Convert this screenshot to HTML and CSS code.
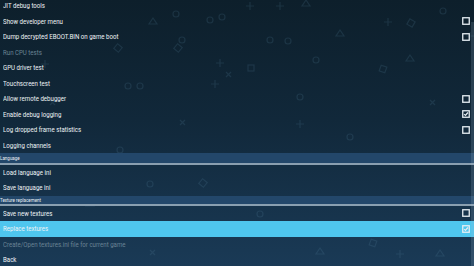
FILE: index.html
```html
<!DOCTYPE html>
<html>
<head>
<meta charset="utf-8">
<link rel="stylesheet" href="styles.css">
</head>
<body>
<div class="screen">
  <svg class="symbols" width="474" height="266" viewBox="0 0 474 266">
    <g fill="none" stroke="#5f8eaa" stroke-width="1.2" opacity="0.17">
      <circle cx="210" cy="20" r="3"/><circle cx="222" cy="17" r="3"/>
      <circle cx="270" cy="40" r="3"/><circle cx="288" cy="41" r="3"/>
      <circle cx="316" cy="60" r="3"/><circle cx="443" cy="11" r="3"/>
      <circle cx="176" cy="14" r="3"/><circle cx="182" cy="40" r="3"/>
      <circle cx="128" cy="86" r="3"/><circle cx="140" cy="86" r="3"/>
      <circle cx="300" cy="97" r="3"/><circle cx="350" cy="137" r="3"/>
      <circle cx="120" cy="150" r="3"/><circle cx="150" cy="184" r="3"/>
      <circle cx="260" cy="214" r="3"/><circle cx="440" cy="160" r="3"/>
      <rect x="408" y="20" width="6" height="6" transform="rotate(30 411 23)"/>
      <rect x="248" y="65" width="6" height="6"/>
      <rect x="380" y="66" width="6" height="6" transform="rotate(20 383 69)"/>
      <rect x="115" y="45" width="6" height="6" transform="rotate(40 118 48)"/>
      <rect x="175" y="45" width="6" height="6" transform="rotate(40 178 48)"/>
      <rect x="200" y="180" width="6" height="6" transform="rotate(40 203 183)"/>
      <rect x="370" y="240" width="6" height="6" transform="rotate(20 373 243)"/>
      <path d="M250 2v8M246 6h8M280 2v8M276 6h8M388 18v8M384 22h8M220 59v8M216 63h8M470 32v8M466 36h8M215 80v8M211 84h8M300 120v8M296 124h8M45 60v8M41 64h8M400 250v8M396 254h8"/>
      <path d="M306 0l4 6h-8zM153 18l4 6h-8zM410 55l4 6h-8zM340 30l4 6h-8zM90 200l4 6h-8zM320 248l4 6h-8zM440 250l4 6h-8z"/>
      <path d="M226 72l5 5M231 72l-5 5M430 100l5 5M435 100l-5 5M50 100l5 5M55 100l-5 5M180 120l5 5M185 120l-5 5M150 250l5 5M155 250l-5 5"/>
    </g>
  </svg>
  <div class="list">
    <div class="item"><span class="label">JIT debug tools</span></div>
    <div class="item"><span class="label">Show developer menu</span><svg class="cb" width="8" height="8" viewBox="0 0 8 8"><rect x="0.75" y="0.75" width="6.5" height="6.5"/></svg></div>
    <div class="item"><span class="label">Dump decrypted EBOOT.BIN on game boot</span><svg class="cb" width="8" height="8" viewBox="0 0 8 8"><rect x="0.75" y="0.75" width="6.5" height="6.5"/></svg></div>
    <div class="item disabled"><span class="label">Run CPU tests</span></div>
    <div class="item"><span class="label">GPU driver test</span></div>
    <div class="item"><span class="label">Touchscreen test</span></div>
    <div class="item"><span class="label">Allow remote debugger</span><svg class="cb" width="8" height="8" viewBox="0 0 8 8"><rect x="0.75" y="0.75" width="6.5" height="6.5"/></svg></div>
    <div class="item"><span class="label">Enable debug logging</span><svg class="cb" width="8" height="8" viewBox="0 0 8 8"><rect x="0.75" y="0.75" width="6.5" height="6.5"/><path d="M2.2 4.1L3.5 5.4L5.9 2.5"/></svg></div>
    <div class="item"><span class="label">Log dropped frame statistics</span><svg class="cb" width="8" height="8" viewBox="0 0 8 8"><rect x="0.75" y="0.75" width="6.5" height="6.5"/></svg></div>
    <div class="item"><span class="label">Logging channels</span></div>
    <div class="header"><span class="htext">Language</span></div>
    <div class="item"><span class="label">Load language ini</span></div>
    <div class="item"><span class="label">Save language ini</span></div>
    <div class="header header2"><span class="htext">Texture replacement</span></div>
    <div class="item"><span class="label">Save new textures</span><svg class="cb" width="8" height="8" viewBox="0 0 8 8"><rect x="0.75" y="0.75" width="6.5" height="6.5"/></svg></div>
    <div class="item selected"><span class="label">Replace textures</span><svg class="cb" width="8" height="8" viewBox="0 0 8 8"><rect x="0.75" y="0.75" width="6.5" height="6.5"/><path d="M2.2 4.1L3.5 5.4L5.9 2.5"/></svg></div>
    <div class="item disabled"><span class="label">Create/Open textures.ini file for current game</span></div>
    <div class="item"><span class="label">Back</span></div>
  </div>
  <div class="scrollbar"></div>
</div>
</body>
</html>
```

FILE: styles.css
```css
html, body {
  margin: 0;
  padding: 0;
}
body {
  width: 474px;
  height: 266px;
  overflow: hidden;
  background: #12293a;
  font-family: Roboto, "Liberation Sans", sans-serif;
}
.screen {
  position: relative;
  width: 474px;
  height: 266px;
  overflow: hidden;
  background: linear-gradient(180deg, #0d1f2b 0%, #11283a 45%, #1a3a56 100%);
}
.symbols {
  position: absolute;
  left: 0;
  top: 0;
}
.list {
  position: relative;
  display: flex;
  flex-direction: column;
  margin-top: -2px;
}
.item {
  height: 15.5px;
  flex: none;
  display: flex;
  align-items: center;
  justify-content: space-between;
  padding: 0 4px 0 3px;
  color: #eef3f6;
  font-size: 7.2px;
}
.label {
  display: inline-block;
  white-space: nowrap;
  transform: scaleX(0.85);
  transform-origin: left center;
}
.item.disabled {
  color: #6a8394;
}
.item.selected {
  background: #4fc6ee;
}
.cb {
  display: block;
  flex: none;
}
.cb rect, .cb path {
  fill: none;
  stroke: #e6eef3;
  stroke-width: 1.3;
}
.header {
  height: 9.5px;
  flex: none;
  background: #23476a;
  border-bottom: 2px solid #8a9fb0;
  display: flex;
  align-items: center;
  color: #e8eef2;
  font-size: 5px;
}
.header2 {
  height: 8px;
}
.htext {
  display: inline-block;
  white-space: nowrap;
  transform: scaleX(0.9);
  transform-origin: left center;
}
.scrollbar {
  position: absolute;
  right: 0;
  top: 22px;
  width: 3px;
  height: 244px;
  background: rgba(160, 190, 210, 0.18);
}
```
